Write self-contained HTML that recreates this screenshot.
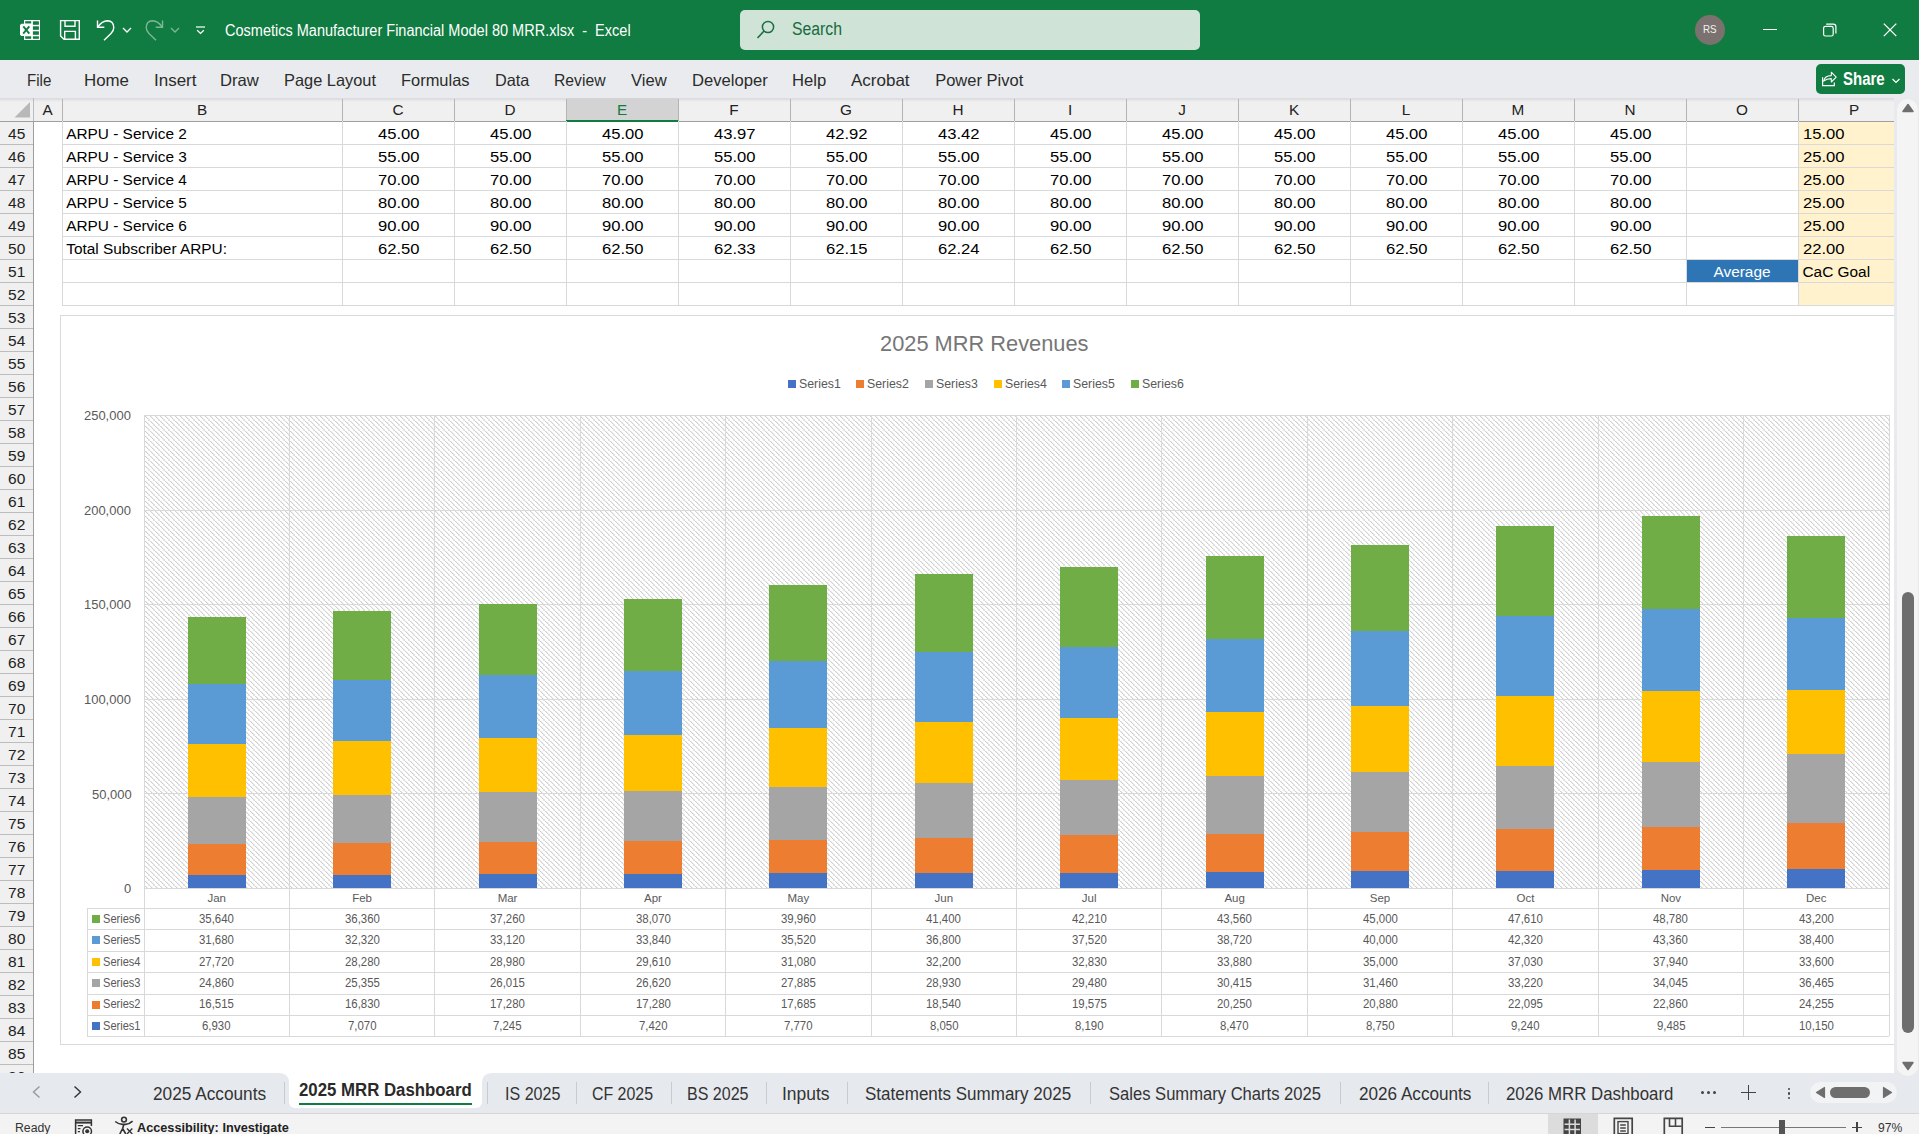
<!DOCTYPE html>
<html><head><meta charset="utf-8"><title>Excel</title>
<style>
html,body{margin:0;padding:0;}
body{width:1919px;height:1134px;overflow:hidden;position:relative;background:#fff;font-family:'Liberation Sans', sans-serif;}
div{box-sizing:border-box;}
</style></head><body>
<div style="position:absolute;left:0px;top:0px;width:1919px;height:60px;background:#107c41;"></div><div style="position:absolute;left:740px;top:10px;width:460px;height:40px;background:#cfe3d6;border-radius:5px"></div><svg style="position:absolute;left:754px;top:18px" width="24" height="24" viewBox="0 0 24 24"><circle cx="14" cy="9" r="5.6" fill="none" stroke="#1a6e40" stroke-width="1.5"/><line x1="10" y1="13" x2="3.5" y2="20" stroke="#1a6e40" stroke-width="1.6"/></svg><div style="position:absolute;left:1695px;top:15px;width:30px;height:30px;background:#7b7270;border-radius:50%"></div><div style="position:absolute;left:1763px;top:29px;width:14px;height:1.3px;background:#ffffff;"></div><svg style="position:absolute;left:1820px;top:20px" width="20" height="20" viewBox="0 0 20 20"><rect x="3.6" y="6.4" width="9.6" height="9.6" rx="1.8" fill="none" stroke="#fff" stroke-width="1.2"/><path d="M6.2 4.2 H13.3 Q15.9 4.2 15.9 6.8 V13.6" fill="none" stroke="#fff" stroke-width="1.2"/></svg><svg style="position:absolute;left:1880px;top:20px" width="20" height="20" viewBox="0 0 20 20"><path d="M3.8 3.6 L16.3 16.1 M16.3 3.6 L3.8 16.1" stroke="#fff" stroke-width="1.3"/></svg><svg style="position:absolute;left:16px;top:16px" width="30" height="28" viewBox="0 0 30 28">
<rect x="8" y="4" width="16" height="20" fill="#fff"/>
<g fill="#107c41"><rect x="9.2" y="5.2" width="6" height="2.4"/><rect x="9.2" y="20.3" width="6" height="2.5"/>
<rect x="16.9" y="5.3" width="6" height="3.5"/><rect x="16.9" y="10.3" width="6" height="3.5"/><rect x="16.9" y="15.3" width="6" height="3.5"/><rect x="16.9" y="20.3" width="6" height="2.5"/></g>
<path d="M4 9 L5.4 7.8 L16 7.8 L16 20 L5.4 20 L4 18.8 Z" fill="#fff"/>
<path d="M7.3 10.3 L13.3 17.6 M13.3 10.3 L7.2 17.6" stroke="#107c41" stroke-width="1.9"/>
</svg><svg style="position:absolute;left:58px;top:18px" width="24" height="24" viewBox="0 0 24 24">
<path d="M2.6 2.6 H21.3 V21.3 H6 L2.6 17.9 Z" fill="none" stroke="#fff" stroke-width="1.4"/>
<path d="M7 2.6 V8.2 H17 V2.6" fill="none" stroke="#fff" stroke-width="1.4"/>
<path d="M6.7 21.3 V13.4 H17.4 V21.3" fill="none" stroke="#fff" stroke-width="1.4"/>
</svg><svg style="position:absolute;left:94px;top:18px" width="24" height="24" viewBox="0 0 24 24">
<path d="M3.5 2.5 V9.3 H10.3" fill="none" stroke="#fff" stroke-width="1.4"/>
<path d="M3.8 9 Q8 3 13.5 2.8 Q19.5 3 19.8 9.5 Q19.8 12.5 17 15.5 L10 22.2" fill="none" stroke="#fff" stroke-width="1.4"/>
</svg><svg style="position:absolute;left:121px;top:25px" width="12" height="10" viewBox="0 0 12 10"><path d="M2 3 L6 7 L10 3" fill="none" stroke="#fff" stroke-width="1.3"/></svg><svg style="position:absolute;left:142px;top:18px" width="24" height="24" viewBox="0 0 24 24" opacity="0.45">
<path d="M20.5 2.5 V9.3 H13.7" fill="none" stroke="#fff" stroke-width="1.4"/>
<path d="M20.2 9 Q16 3 10.5 2.8 Q4.5 3 4.2 9.5 Q4.2 12.5 7 15.5 L14 22.2" fill="none" stroke="#fff" stroke-width="1.4"/>
</svg><svg style="position:absolute;left:169px;top:25px" width="12" height="10" viewBox="0 0 12 10" opacity="0.45"><path d="M2 3 L6 7 L10 3" fill="none" stroke="#fff" stroke-width="1.3"/></svg><svg style="position:absolute;left:193px;top:23px" width="14" height="14" viewBox="0 0 14 14"><path d="M3 4 H12" stroke="#fff" stroke-width="1.2"/><path d="M4.2 7.2 L7.5 10.4 L10.8 7.2" fill="none" stroke="#fff" stroke-width="1.3"/></svg><div style="position:absolute;left:0px;top:60px;width:1919px;height:38px;background:#e9ebee;"></div><div style="position:absolute;left:1816px;top:64px;width:89px;height:30px;background:#107c41;border-radius:5px"></div><svg style="position:absolute;left:1820px;top:69px" width="20" height="20" viewBox="0 0 20 20">
<path d="M2.6 8.2 V16.6 H14.3 V13.4" fill="none" stroke="#fff" stroke-width="1.2"/>
<path d="M3.6 12.2 Q4.6 6.6 11.3 6.6 L11.3 3.2 L16.2 8.2 L11.3 13 L11.3 9.6 Q6.6 9.6 3.6 12.2 Z" fill="none" stroke="#fff" stroke-width="1.05" stroke-linejoin="round"/>
</svg><svg style="position:absolute;left:1890px;top:76px" width="12" height="10" viewBox="0 0 12 10"><path d="M2.5 3 L6 6.5 L9.5 3" fill="none" stroke="#fff" stroke-width="1.2"/></svg><div style="position:absolute;left:0px;top:98px;width:1894px;height:975px;background:#ffffff;"></div><div style="position:absolute;left:0px;top:98px;width:1894px;height:23px;background:#f0f0f0;"></div><div style="position:absolute;left:0px;top:98px;width:1894px;height:4px;background:linear-gradient(#d9dadc,#f0f0f0);"></div><svg style="position:absolute;left:0px;top:98px" width="33" height="23"><path d="M14.5 19.5 L30 19.5 L30 4 Z" fill="#b8b8b8"/></svg><div style="position:absolute;left:566px;top:98px;width:112px;height:23px;background:#d3d3d3;"></div><div style="position:absolute;left:62px;top:99px;width:1px;height:22px;background:#b4b4b4;"></div><div style="position:absolute;left:342px;top:99px;width:1px;height:22px;background:#b4b4b4;"></div><div style="position:absolute;left:454px;top:99px;width:1px;height:22px;background:#b4b4b4;"></div><div style="position:absolute;left:566px;top:99px;width:1px;height:22px;background:#b4b4b4;"></div><div style="position:absolute;left:678px;top:99px;width:1px;height:22px;background:#b4b4b4;"></div><div style="position:absolute;left:790px;top:99px;width:1px;height:22px;background:#b4b4b4;"></div><div style="position:absolute;left:902px;top:99px;width:1px;height:22px;background:#b4b4b4;"></div><div style="position:absolute;left:1014px;top:99px;width:1px;height:22px;background:#b4b4b4;"></div><div style="position:absolute;left:1126px;top:99px;width:1px;height:22px;background:#b4b4b4;"></div><div style="position:absolute;left:1238px;top:99px;width:1px;height:22px;background:#b4b4b4;"></div><div style="position:absolute;left:1350px;top:99px;width:1px;height:22px;background:#b4b4b4;"></div><div style="position:absolute;left:1462px;top:99px;width:1px;height:22px;background:#b4b4b4;"></div><div style="position:absolute;left:1574px;top:99px;width:1px;height:22px;background:#b4b4b4;"></div><div style="position:absolute;left:1686px;top:99px;width:1px;height:22px;background:#b4b4b4;"></div><div style="position:absolute;left:1798px;top:99px;width:1px;height:22px;background:#b4b4b4;"></div><div style="position:absolute;left:1910px;top:99px;width:1px;height:22px;background:#b4b4b4;"></div><div style="position:absolute;left:33px;top:98px;width:1px;height:23px;background:#bdbdbd;"></div><div style="position:absolute;left:0px;top:121px;width:1894px;height:1px;background:#9e9e9e;"></div><div style="position:absolute;left:566px;top:120px;width:112px;height:2px;background:#107c41;"></div><div style="position:absolute;left:0px;top:122px;width:33px;height:951px;background:#f0f0f0;"></div><div style="position:absolute;left:33px;top:121px;width:1px;height:952px;background:#9e9e9e;"></div><div style="position:absolute;left:0px;top:144px;width:33px;height:1px;background:#bdbdbd;"></div><div style="position:absolute;left:0px;top:167px;width:33px;height:1px;background:#bdbdbd;"></div><div style="position:absolute;left:0px;top:190px;width:33px;height:1px;background:#bdbdbd;"></div><div style="position:absolute;left:0px;top:213px;width:33px;height:1px;background:#bdbdbd;"></div><div style="position:absolute;left:0px;top:236px;width:33px;height:1px;background:#bdbdbd;"></div><div style="position:absolute;left:0px;top:259px;width:33px;height:1px;background:#bdbdbd;"></div><div style="position:absolute;left:0px;top:282px;width:33px;height:1px;background:#bdbdbd;"></div><div style="position:absolute;left:0px;top:305px;width:33px;height:1px;background:#bdbdbd;"></div><div style="position:absolute;left:0px;top:328px;width:33px;height:1px;background:#bdbdbd;"></div><div style="position:absolute;left:0px;top:351px;width:33px;height:1px;background:#bdbdbd;"></div><div style="position:absolute;left:0px;top:374px;width:33px;height:1px;background:#bdbdbd;"></div><div style="position:absolute;left:0px;top:397px;width:33px;height:1px;background:#bdbdbd;"></div><div style="position:absolute;left:0px;top:420px;width:33px;height:1px;background:#bdbdbd;"></div><div style="position:absolute;left:0px;top:443px;width:33px;height:1px;background:#bdbdbd;"></div><div style="position:absolute;left:0px;top:466px;width:33px;height:1px;background:#bdbdbd;"></div><div style="position:absolute;left:0px;top:489px;width:33px;height:1px;background:#bdbdbd;"></div><div style="position:absolute;left:0px;top:512px;width:33px;height:1px;background:#bdbdbd;"></div><div style="position:absolute;left:0px;top:535px;width:33px;height:1px;background:#bdbdbd;"></div><div style="position:absolute;left:0px;top:558px;width:33px;height:1px;background:#bdbdbd;"></div><div style="position:absolute;left:0px;top:581px;width:33px;height:1px;background:#bdbdbd;"></div><div style="position:absolute;left:0px;top:604px;width:33px;height:1px;background:#bdbdbd;"></div><div style="position:absolute;left:0px;top:627px;width:33px;height:1px;background:#bdbdbd;"></div><div style="position:absolute;left:0px;top:650px;width:33px;height:1px;background:#bdbdbd;"></div><div style="position:absolute;left:0px;top:673px;width:33px;height:1px;background:#bdbdbd;"></div><div style="position:absolute;left:0px;top:696px;width:33px;height:1px;background:#bdbdbd;"></div><div style="position:absolute;left:0px;top:719px;width:33px;height:1px;background:#bdbdbd;"></div><div style="position:absolute;left:0px;top:742px;width:33px;height:1px;background:#bdbdbd;"></div><div style="position:absolute;left:0px;top:765px;width:33px;height:1px;background:#bdbdbd;"></div><div style="position:absolute;left:0px;top:788px;width:33px;height:1px;background:#bdbdbd;"></div><div style="position:absolute;left:0px;top:811px;width:33px;height:1px;background:#bdbdbd;"></div><div style="position:absolute;left:0px;top:834px;width:33px;height:1px;background:#bdbdbd;"></div><div style="position:absolute;left:0px;top:857px;width:33px;height:1px;background:#bdbdbd;"></div><div style="position:absolute;left:0px;top:880px;width:33px;height:1px;background:#bdbdbd;"></div><div style="position:absolute;left:0px;top:903px;width:33px;height:1px;background:#bdbdbd;"></div><div style="position:absolute;left:0px;top:926px;width:33px;height:1px;background:#bdbdbd;"></div><div style="position:absolute;left:0px;top:949px;width:33px;height:1px;background:#bdbdbd;"></div><div style="position:absolute;left:0px;top:972px;width:33px;height:1px;background:#bdbdbd;"></div><div style="position:absolute;left:0px;top:995px;width:33px;height:1px;background:#bdbdbd;"></div><div style="position:absolute;left:0px;top:1018px;width:33px;height:1px;background:#bdbdbd;"></div><div style="position:absolute;left:0px;top:1041px;width:33px;height:1px;background:#bdbdbd;"></div><div style="position:absolute;left:0px;top:1064px;width:33px;height:1px;background:#bdbdbd;"></div><div style="position:absolute;left:0px;top:1087px;width:33px;height:1px;background:#bdbdbd;"></div><div style="position:absolute;left:0;top:1065px;width:33px;height:8px;overflow:hidden"><div style="position:absolute;left:8.1px;top:3.78px;font-size:15.5px;line-height:1;color:#222">86</div></div><div style="position:absolute;left:1798px;top:122px;width:96px;height:184px;background:#fff2cc;"></div><div style="position:absolute;left:1687px;top:260px;width:111px;height:22px;background:#2e75b6;"></div><div style="position:absolute;left:62px;top:144px;width:1832px;height:1px;background:#d9d9d9;"></div><div style="position:absolute;left:62px;top:167px;width:1832px;height:1px;background:#d9d9d9;"></div><div style="position:absolute;left:62px;top:190px;width:1832px;height:1px;background:#d9d9d9;"></div><div style="position:absolute;left:62px;top:213px;width:1832px;height:1px;background:#d9d9d9;"></div><div style="position:absolute;left:62px;top:236px;width:1832px;height:1px;background:#d9d9d9;"></div><div style="position:absolute;left:62px;top:259px;width:1832px;height:1px;background:#d9d9d9;"></div><div style="position:absolute;left:62px;top:282px;width:1832px;height:1px;background:#d9d9d9;"></div><div style="position:absolute;left:62px;top:305px;width:1832px;height:1px;background:#d9d9d9;"></div><div style="position:absolute;left:62px;top:121px;width:1px;height:184px;background:#d9d9d9;"></div><div style="position:absolute;left:342px;top:121px;width:1px;height:184px;background:#d9d9d9;"></div><div style="position:absolute;left:454px;top:121px;width:1px;height:184px;background:#d9d9d9;"></div><div style="position:absolute;left:566px;top:121px;width:1px;height:184px;background:#d9d9d9;"></div><div style="position:absolute;left:678px;top:121px;width:1px;height:184px;background:#d9d9d9;"></div><div style="position:absolute;left:790px;top:121px;width:1px;height:184px;background:#d9d9d9;"></div><div style="position:absolute;left:902px;top:121px;width:1px;height:184px;background:#d9d9d9;"></div><div style="position:absolute;left:1014px;top:121px;width:1px;height:184px;background:#d9d9d9;"></div><div style="position:absolute;left:1126px;top:121px;width:1px;height:184px;background:#d9d9d9;"></div><div style="position:absolute;left:1238px;top:121px;width:1px;height:184px;background:#d9d9d9;"></div><div style="position:absolute;left:1350px;top:121px;width:1px;height:184px;background:#d9d9d9;"></div><div style="position:absolute;left:1462px;top:121px;width:1px;height:184px;background:#d9d9d9;"></div><div style="position:absolute;left:1574px;top:121px;width:1px;height:184px;background:#d9d9d9;"></div><div style="position:absolute;left:1686px;top:121px;width:1px;height:184px;background:#d9d9d9;"></div><div style="position:absolute;left:1798px;top:121px;width:1px;height:184px;background:#d9d9d9;"></div><div style="position:absolute;left:60px;top:315px;width:1834px;height:730px;background:#ffffff;border:1px solid #d9d9d9;box-sizing:border-box;border-right:none"></div><div style="position:absolute;left:788px;top:380px;width:8px;height:8px;background:#4472c4;"></div><div style="position:absolute;left:856px;top:380px;width:8px;height:8px;background:#ed7d31;"></div><div style="position:absolute;left:925px;top:380px;width:8px;height:8px;background:#a5a5a5;"></div><div style="position:absolute;left:993.8px;top:380px;width:8px;height:8px;background:#ffc000;"></div><div style="position:absolute;left:1062px;top:380px;width:8px;height:8px;background:#5b9bd5;"></div><div style="position:absolute;left:1131px;top:380px;width:8px;height:8px;background:#70ad47;"></div><svg style="position:absolute;left:144px;top:415px" width="1745" height="473"><defs><pattern id="hatch" width="5" height="5" patternUnits="userSpaceOnUse"><rect width="5" height="5" fill="#ffffff"/><g shape-rendering="crispEdges"><rect x="1" y="1" width="1" height="1" fill="#cfcfcf"/><rect x="2" y="2" width="1" height="1" fill="#cfcfcf"/><rect x="3" y="3" width="1" height="1" fill="#cfcfcf"/><rect x="4" y="4" width="1" height="1" fill="#dcdcdc"/><rect x="0" y="0" width="1" height="1" fill="#dcdcdc"/><rect x="2" y="1" width="1" height="1" fill="#efefef"/><rect x="3" y="2" width="1" height="1" fill="#efefef"/><rect x="4" y="3" width="1" height="1" fill="#efefef"/><rect x="0" y="4" width="1" height="1" fill="#e6e6e6"/><rect x="4" y="0" width="1" height="1" fill="#e6e6e6"/></g></pattern></defs><rect width="100%" height="100%" fill="url(#hatch)"/></svg><div style="position:absolute;left:144px;top:415px;width:1745px;height:1px;background:#d9d9d9;"></div><div style="position:absolute;left:144px;top:510px;width:1745px;height:1px;background:#d9d9d9;"></div><div style="position:absolute;left:144px;top:604px;width:1745px;height:1px;background:#d9d9d9;"></div><div style="position:absolute;left:144px;top:699px;width:1745px;height:1px;background:#d9d9d9;"></div><div style="position:absolute;left:144px;top:793px;width:1745px;height:1px;background:#d9d9d9;"></div><div style="position:absolute;left:144px;top:888px;width:1745px;height:1px;background:#d9d9d9;"></div><div style="position:absolute;left:144px;top:415px;width:1px;height:621px;background:#d9d9d9;"></div><div style="position:absolute;left:289px;top:415px;width:1px;height:621px;background:#d9d9d9;"></div><div style="position:absolute;left:434px;top:415px;width:1px;height:621px;background:#d9d9d9;"></div><div style="position:absolute;left:580px;top:415px;width:1px;height:621px;background:#d9d9d9;"></div><div style="position:absolute;left:725px;top:415px;width:1px;height:621px;background:#d9d9d9;"></div><div style="position:absolute;left:871px;top:415px;width:1px;height:621px;background:#d9d9d9;"></div><div style="position:absolute;left:1016px;top:415px;width:1px;height:621px;background:#d9d9d9;"></div><div style="position:absolute;left:1161px;top:415px;width:1px;height:621px;background:#d9d9d9;"></div><div style="position:absolute;left:1307px;top:415px;width:1px;height:621px;background:#d9d9d9;"></div><div style="position:absolute;left:1452px;top:415px;width:1px;height:621px;background:#d9d9d9;"></div><div style="position:absolute;left:1598px;top:415px;width:1px;height:621px;background:#d9d9d9;"></div><div style="position:absolute;left:1743px;top:415px;width:1px;height:621px;background:#d9d9d9;"></div><div style="position:absolute;left:1889px;top:415px;width:1px;height:621px;background:#d9d9d9;"></div><div style="position:absolute;left:144px;top:415px;width:1px;height:473px;background:#d9d9d9;"></div><div style="position:absolute;left:187.71px;top:874.89px;width:58px;height:13.11px;background:#4472c4;"></div><div style="position:absolute;left:187.71px;top:843.64px;width:58px;height:31.25px;background:#ed7d31;"></div><div style="position:absolute;left:187.71px;top:796.61px;width:58px;height:47.04px;background:#a5a5a5;"></div><div style="position:absolute;left:187.71px;top:744.16px;width:58px;height:52.45px;background:#ffc000;"></div><div style="position:absolute;left:187.71px;top:684.22px;width:58px;height:59.94px;background:#5b9bd5;"></div><div style="position:absolute;left:187.71px;top:616.79px;width:58px;height:67.43px;background:#70ad47;"></div><div style="position:absolute;left:333.12px;top:874.62px;width:58px;height:13.38px;background:#4472c4;"></div><div style="position:absolute;left:333.12px;top:842.78px;width:58px;height:31.84px;background:#ed7d31;"></div><div style="position:absolute;left:333.12px;top:794.81px;width:58px;height:47.97px;background:#a5a5a5;"></div><div style="position:absolute;left:333.12px;top:741.3px;width:58px;height:53.51px;background:#ffc000;"></div><div style="position:absolute;left:333.12px;top:680.15px;width:58px;height:61.15px;background:#5b9bd5;"></div><div style="position:absolute;left:333.12px;top:611.36px;width:58px;height:68.79px;background:#70ad47;"></div><div style="position:absolute;left:478.54px;top:874.29px;width:58px;height:13.71px;background:#4472c4;"></div><div style="position:absolute;left:478.54px;top:841.6px;width:58px;height:32.69px;background:#ed7d31;"></div><div style="position:absolute;left:478.54px;top:792.38px;width:58px;height:49.22px;background:#a5a5a5;"></div><div style="position:absolute;left:478.54px;top:737.55px;width:58px;height:54.83px;background:#ffc000;"></div><div style="position:absolute;left:478.54px;top:674.89px;width:58px;height:62.66px;background:#5b9bd5;"></div><div style="position:absolute;left:478.54px;top:604.39px;width:58px;height:70.5px;background:#70ad47;"></div><div style="position:absolute;left:623.96px;top:873.96px;width:58px;height:14.04px;background:#4472c4;"></div><div style="position:absolute;left:623.96px;top:841.27px;width:58px;height:32.69px;background:#ed7d31;"></div><div style="position:absolute;left:623.96px;top:790.9px;width:58px;height:50.37px;background:#a5a5a5;"></div><div style="position:absolute;left:623.96px;top:734.88px;width:58px;height:56.02px;background:#ffc000;"></div><div style="position:absolute;left:623.96px;top:670.86px;width:58px;height:64.03px;background:#5b9bd5;"></div><div style="position:absolute;left:623.96px;top:598.83px;width:58px;height:72.03px;background:#70ad47;"></div><div style="position:absolute;left:769.38px;top:873.3px;width:58px;height:14.7px;background:#4472c4;"></div><div style="position:absolute;left:769.38px;top:839.84px;width:58px;height:33.46px;background:#ed7d31;"></div><div style="position:absolute;left:769.38px;top:787.08px;width:58px;height:52.76px;background:#a5a5a5;"></div><div style="position:absolute;left:769.38px;top:728.28px;width:58px;height:58.8px;background:#ffc000;"></div><div style="position:absolute;left:769.38px;top:661.07px;width:58px;height:67.2px;background:#5b9bd5;"></div><div style="position:absolute;left:769.38px;top:585.47px;width:58px;height:75.6px;background:#70ad47;"></div><div style="position:absolute;left:914.79px;top:872.77px;width:58px;height:15.23px;background:#4472c4;"></div><div style="position:absolute;left:914.79px;top:837.69px;width:58px;height:35.08px;background:#ed7d31;"></div><div style="position:absolute;left:914.79px;top:782.96px;width:58px;height:54.74px;background:#a5a5a5;"></div><div style="position:absolute;left:914.79px;top:722.03px;width:58px;height:60.92px;background:#ffc000;"></div><div style="position:absolute;left:914.79px;top:652.41px;width:58px;height:69.63px;background:#5b9bd5;"></div><div style="position:absolute;left:914.79px;top:574.08px;width:58px;height:78.33px;background:#70ad47;"></div><div style="position:absolute;left:1060.21px;top:872.5px;width:58px;height:15.5px;background:#4472c4;"></div><div style="position:absolute;left:1060.21px;top:835.47px;width:58px;height:37.04px;background:#ed7d31;"></div><div style="position:absolute;left:1060.21px;top:779.69px;width:58px;height:55.78px;background:#a5a5a5;"></div><div style="position:absolute;left:1060.21px;top:717.58px;width:58px;height:62.11px;background:#ffc000;"></div><div style="position:absolute;left:1060.21px;top:646.59px;width:58px;height:70.99px;background:#5b9bd5;"></div><div style="position:absolute;left:1060.21px;top:566.73px;width:58px;height:79.86px;background:#70ad47;"></div><div style="position:absolute;left:1205.62px;top:871.97px;width:58px;height:16.03px;background:#4472c4;"></div><div style="position:absolute;left:1205.62px;top:833.66px;width:58px;height:38.31px;background:#ed7d31;"></div><div style="position:absolute;left:1205.62px;top:776.12px;width:58px;height:57.55px;background:#a5a5a5;"></div><div style="position:absolute;left:1205.62px;top:712.02px;width:58px;height:64.1px;background:#ffc000;"></div><div style="position:absolute;left:1205.62px;top:638.76px;width:58px;height:73.26px;background:#5b9bd5;"></div><div style="position:absolute;left:1205.62px;top:556.34px;width:58px;height:82.42px;background:#70ad47;"></div><div style="position:absolute;left:1351.04px;top:871.45px;width:58px;height:16.55px;background:#4472c4;"></div><div style="position:absolute;left:1351.04px;top:831.94px;width:58px;height:39.5px;background:#ed7d31;"></div><div style="position:absolute;left:1351.04px;top:772.42px;width:58px;height:59.52px;background:#a5a5a5;"></div><div style="position:absolute;left:1351.04px;top:706.2px;width:58px;height:66.22px;background:#ffc000;"></div><div style="position:absolute;left:1351.04px;top:630.52px;width:58px;height:75.68px;background:#5b9bd5;"></div><div style="position:absolute;left:1351.04px;top:545.38px;width:58px;height:85.14px;background:#70ad47;"></div><div style="position:absolute;left:1496.46px;top:870.52px;width:58px;height:17.48px;background:#4472c4;"></div><div style="position:absolute;left:1496.46px;top:828.71px;width:58px;height:41.8px;background:#ed7d31;"></div><div style="position:absolute;left:1496.46px;top:765.86px;width:58px;height:62.85px;background:#a5a5a5;"></div><div style="position:absolute;left:1496.46px;top:695.8px;width:58px;height:70.06px;background:#ffc000;"></div><div style="position:absolute;left:1496.46px;top:615.73px;width:58px;height:80.07px;background:#5b9bd5;"></div><div style="position:absolute;left:1496.46px;top:525.65px;width:58px;height:90.08px;background:#70ad47;"></div><div style="position:absolute;left:1641.88px;top:870.05px;width:58px;height:17.95px;background:#4472c4;"></div><div style="position:absolute;left:1641.88px;top:826.8px;width:58px;height:43.25px;background:#ed7d31;"></div><div style="position:absolute;left:1641.88px;top:762.39px;width:58px;height:64.41px;background:#a5a5a5;"></div><div style="position:absolute;left:1641.88px;top:690.61px;width:58px;height:71.78px;background:#ffc000;"></div><div style="position:absolute;left:1641.88px;top:608.57px;width:58px;height:82.04px;background:#5b9bd5;"></div><div style="position:absolute;left:1641.88px;top:516.28px;width:58px;height:92.29px;background:#70ad47;"></div><div style="position:absolute;left:1787.29px;top:868.8px;width:58px;height:19.2px;background:#4472c4;"></div><div style="position:absolute;left:1787.29px;top:822.91px;width:58px;height:45.89px;background:#ed7d31;"></div><div style="position:absolute;left:1787.29px;top:753.91px;width:58px;height:68.99px;background:#a5a5a5;"></div><div style="position:absolute;left:1787.29px;top:690.34px;width:58px;height:63.57px;background:#ffc000;"></div><div style="position:absolute;left:1787.29px;top:617.69px;width:58px;height:72.65px;background:#5b9bd5;"></div><div style="position:absolute;left:1787.29px;top:535.96px;width:58px;height:81.73px;background:#70ad47;"></div><div style="position:absolute;left:87px;top:908px;width:1802px;height:1px;background:#d9d9d9;"></div><div style="position:absolute;left:87px;top:929px;width:1802px;height:1px;background:#d9d9d9;"></div><div style="position:absolute;left:87px;top:951px;width:1802px;height:1px;background:#d9d9d9;"></div><div style="position:absolute;left:87px;top:972px;width:1802px;height:1px;background:#d9d9d9;"></div><div style="position:absolute;left:87px;top:994px;width:1802px;height:1px;background:#d9d9d9;"></div><div style="position:absolute;left:87px;top:1015px;width:1802px;height:1px;background:#d9d9d9;"></div><div style="position:absolute;left:87px;top:1036px;width:1802px;height:1px;background:#d9d9d9;"></div><div style="position:absolute;left:87px;top:908px;width:1px;height:129px;background:#d9d9d9;"></div><div style="position:absolute;left:92px;top:915px;width:8px;height:7.5px;background:#70ad47;"></div><div style="position:absolute;left:92px;top:936px;width:8px;height:7.5px;background:#5b9bd5;"></div><div style="position:absolute;left:92px;top:958px;width:8px;height:7.5px;background:#ffc000;"></div><div style="position:absolute;left:92px;top:979px;width:8px;height:7.5px;background:#a5a5a5;"></div><div style="position:absolute;left:92px;top:1001px;width:8px;height:7.5px;background:#ed7d31;"></div><div style="position:absolute;left:92px;top:1022px;width:8px;height:7.5px;background:#4472c4;"></div><div style="position:absolute;left:1889px;top:415px;width:1px;height:621px;background:#d9d9d9;"></div>
<div style="position:absolute;left:225.00px;top:23.39px;font-size:15.6px;font-weight:400;color:#ffffff;line-height:1;white-space:pre;transform:scaleX(0.9305);transform-origin:0 0;">Cosmetics Manufacturer Financial Model 80 MRR.xlsx  -  Excel</div><div style="position:absolute;left:792.40px;top:21.40px;font-size:17.6px;font-weight:400;color:#176b3e;line-height:1;white-space:pre;transform:scaleX(0.8969);transform-origin:0 0;">Search</div><div style="position:absolute;left:1703.20px;top:24.47px;font-size:11.5px;font-weight:400;color:#f2f2f2;line-height:1;white-space:pre;transform:scaleX(0.8508);transform-origin:0 0;">RS</div><div style="position:absolute;left:27.00px;top:72.23px;font-size:16.5px;font-weight:400;color:#2b2b2b;line-height:1;white-space:pre;transform:scaleX(0.9137);transform-origin:0 0;">File</div><div style="position:absolute;left:84.30px;top:72.23px;font-size:16.5px;font-weight:400;color:#2b2b2b;line-height:1;white-space:pre;transform:scaleX(1.0224);transform-origin:0 0;">Home</div><div style="position:absolute;left:153.80px;top:72.23px;font-size:16.5px;font-weight:400;color:#2b2b2b;line-height:1;white-space:pre;transform:scaleX(1.0295);transform-origin:0 0;">Insert</div><div style="position:absolute;left:220.00px;top:72.23px;font-size:16.5px;font-weight:400;color:#2b2b2b;line-height:1;white-space:pre;transform:scaleX(1.0074);transform-origin:0 0;">Draw</div><div style="position:absolute;left:284.00px;top:72.23px;font-size:16.5px;font-weight:400;color:#2b2b2b;line-height:1;white-space:pre;transform:scaleX(0.9927);transform-origin:0 0;">Page Layout</div><div style="position:absolute;left:401.00px;top:72.23px;font-size:16.5px;font-weight:400;color:#2b2b2b;line-height:1;white-space:pre;transform:scaleX(0.9961);transform-origin:0 0;">Formulas</div><div style="position:absolute;left:494.60px;top:72.23px;font-size:16.5px;font-weight:400;color:#2b2b2b;line-height:1;white-space:pre;transform:scaleX(0.9868);transform-origin:0 0;">Data</div><div style="position:absolute;left:554.40px;top:72.23px;font-size:16.5px;font-weight:400;color:#2b2b2b;line-height:1;white-space:pre;transform:scaleX(0.9536);transform-origin:0 0;">Review</div><div style="position:absolute;left:631.00px;top:72.23px;font-size:16.5px;font-weight:400;color:#2b2b2b;line-height:1;white-space:pre;transform:scaleX(1.0065);transform-origin:0 0;">View</div><div style="position:absolute;left:691.60px;top:72.23px;font-size:16.5px;font-weight:400;color:#2b2b2b;line-height:1;white-space:pre;transform:scaleX(1.0077);transform-origin:0 0;">Developer</div><div style="position:absolute;left:792.20px;top:72.23px;font-size:16.5px;font-weight:400;color:#2b2b2b;line-height:1;white-space:pre;transform:scaleX(1.0077);transform-origin:0 0;">Help</div><div style="position:absolute;left:851.20px;top:72.23px;font-size:16.5px;font-weight:400;color:#2b2b2b;line-height:1;white-space:pre;transform:scaleX(1.0303);transform-origin:0 0;">Acrobat</div><div style="position:absolute;left:935.20px;top:72.23px;font-size:16.5px;font-weight:400;color:#2b2b2b;line-height:1;white-space:pre;">Power Pivot</div><div style="position:absolute;left:1842.70px;top:71.39px;font-size:17.5px;font-weight:700;color:#ffffff;line-height:1;white-space:pre;transform:scaleX(0.8573);transform-origin:0 0;">Share</div><div style="position:absolute;left:42.40px;top:102.35px;font-size:15.3px;font-weight:400;color:#222222;line-height:1;white-space:pre;">A</div><div style="position:absolute;left:196.90px;top:102.35px;font-size:15.3px;font-weight:400;color:#222222;line-height:1;white-space:pre;">B</div><div style="position:absolute;left:392.47px;top:102.35px;font-size:15.3px;font-weight:400;color:#222222;line-height:1;white-space:pre;">C</div><div style="position:absolute;left:504.47px;top:102.35px;font-size:15.3px;font-weight:400;color:#222222;line-height:1;white-space:pre;">D</div><div style="position:absolute;left:616.90px;top:102.35px;font-size:15.3px;font-weight:400;color:#107c41;line-height:1;white-space:pre;">E</div><div style="position:absolute;left:729.32px;top:102.35px;font-size:15.3px;font-weight:400;color:#222222;line-height:1;white-space:pre;">F</div><div style="position:absolute;left:840.05px;top:102.35px;font-size:15.3px;font-weight:400;color:#222222;line-height:1;white-space:pre;">G</div><div style="position:absolute;left:952.47px;top:102.35px;font-size:15.3px;font-weight:400;color:#222222;line-height:1;white-space:pre;">H</div><div style="position:absolute;left:1067.88px;top:102.35px;font-size:15.3px;font-weight:400;color:#222222;line-height:1;white-space:pre;">I</div><div style="position:absolute;left:1178.17px;top:102.35px;font-size:15.3px;font-weight:400;color:#222222;line-height:1;white-space:pre;">J</div><div style="position:absolute;left:1288.90px;top:102.35px;font-size:15.3px;font-weight:400;color:#222222;line-height:1;white-space:pre;">K</div><div style="position:absolute;left:1401.74px;top:102.35px;font-size:15.3px;font-weight:400;color:#222222;line-height:1;white-space:pre;">L</div><div style="position:absolute;left:1511.62px;top:102.35px;font-size:15.3px;font-weight:400;color:#222222;line-height:1;white-space:pre;">M</div><div style="position:absolute;left:1624.47px;top:102.35px;font-size:15.3px;font-weight:400;color:#222222;line-height:1;white-space:pre;">N</div><div style="position:absolute;left:1736.05px;top:102.35px;font-size:15.3px;font-weight:400;color:#222222;line-height:1;white-space:pre;">O</div><div style="position:absolute;left:1848.90px;top:102.35px;font-size:15.3px;font-weight:400;color:#222222;line-height:1;white-space:pre;">P</div><div style="position:absolute;left:8.07px;top:125.78px;font-size:15.5px;font-weight:400;color:#222222;line-height:1;white-space:pre;">45</div><div style="position:absolute;left:8.07px;top:148.78px;font-size:15.5px;font-weight:400;color:#222222;line-height:1;white-space:pre;">46</div><div style="position:absolute;left:8.07px;top:171.78px;font-size:15.5px;font-weight:400;color:#222222;line-height:1;white-space:pre;">47</div><div style="position:absolute;left:8.07px;top:194.78px;font-size:15.5px;font-weight:400;color:#222222;line-height:1;white-space:pre;">48</div><div style="position:absolute;left:8.07px;top:217.78px;font-size:15.5px;font-weight:400;color:#222222;line-height:1;white-space:pre;">49</div><div style="position:absolute;left:8.07px;top:240.78px;font-size:15.5px;font-weight:400;color:#222222;line-height:1;white-space:pre;">50</div><div style="position:absolute;left:8.07px;top:263.78px;font-size:15.5px;font-weight:400;color:#222222;line-height:1;white-space:pre;">51</div><div style="position:absolute;left:8.07px;top:286.78px;font-size:15.5px;font-weight:400;color:#222222;line-height:1;white-space:pre;">52</div><div style="position:absolute;left:8.07px;top:309.78px;font-size:15.5px;font-weight:400;color:#222222;line-height:1;white-space:pre;">53</div><div style="position:absolute;left:8.07px;top:332.78px;font-size:15.5px;font-weight:400;color:#222222;line-height:1;white-space:pre;">54</div><div style="position:absolute;left:8.07px;top:355.78px;font-size:15.5px;font-weight:400;color:#222222;line-height:1;white-space:pre;">55</div><div style="position:absolute;left:8.07px;top:378.78px;font-size:15.5px;font-weight:400;color:#222222;line-height:1;white-space:pre;">56</div><div style="position:absolute;left:8.07px;top:401.78px;font-size:15.5px;font-weight:400;color:#222222;line-height:1;white-space:pre;">57</div><div style="position:absolute;left:8.07px;top:424.78px;font-size:15.5px;font-weight:400;color:#222222;line-height:1;white-space:pre;">58</div><div style="position:absolute;left:8.07px;top:447.78px;font-size:15.5px;font-weight:400;color:#222222;line-height:1;white-space:pre;">59</div><div style="position:absolute;left:8.07px;top:470.78px;font-size:15.5px;font-weight:400;color:#222222;line-height:1;white-space:pre;">60</div><div style="position:absolute;left:8.07px;top:493.78px;font-size:15.5px;font-weight:400;color:#222222;line-height:1;white-space:pre;">61</div><div style="position:absolute;left:8.07px;top:516.78px;font-size:15.5px;font-weight:400;color:#222222;line-height:1;white-space:pre;">62</div><div style="position:absolute;left:8.07px;top:539.78px;font-size:15.5px;font-weight:400;color:#222222;line-height:1;white-space:pre;">63</div><div style="position:absolute;left:8.07px;top:562.78px;font-size:15.5px;font-weight:400;color:#222222;line-height:1;white-space:pre;">64</div><div style="position:absolute;left:8.07px;top:585.78px;font-size:15.5px;font-weight:400;color:#222222;line-height:1;white-space:pre;">65</div><div style="position:absolute;left:8.07px;top:608.78px;font-size:15.5px;font-weight:400;color:#222222;line-height:1;white-space:pre;">66</div><div style="position:absolute;left:8.07px;top:631.78px;font-size:15.5px;font-weight:400;color:#222222;line-height:1;white-space:pre;">67</div><div style="position:absolute;left:8.07px;top:654.78px;font-size:15.5px;font-weight:400;color:#222222;line-height:1;white-space:pre;">68</div><div style="position:absolute;left:8.07px;top:677.78px;font-size:15.5px;font-weight:400;color:#222222;line-height:1;white-space:pre;">69</div><div style="position:absolute;left:8.07px;top:700.78px;font-size:15.5px;font-weight:400;color:#222222;line-height:1;white-space:pre;">70</div><div style="position:absolute;left:8.07px;top:723.78px;font-size:15.5px;font-weight:400;color:#222222;line-height:1;white-space:pre;">71</div><div style="position:absolute;left:8.07px;top:746.78px;font-size:15.5px;font-weight:400;color:#222222;line-height:1;white-space:pre;">72</div><div style="position:absolute;left:8.07px;top:769.78px;font-size:15.5px;font-weight:400;color:#222222;line-height:1;white-space:pre;">73</div><div style="position:absolute;left:8.07px;top:792.78px;font-size:15.5px;font-weight:400;color:#222222;line-height:1;white-space:pre;">74</div><div style="position:absolute;left:8.07px;top:815.78px;font-size:15.5px;font-weight:400;color:#222222;line-height:1;white-space:pre;">75</div><div style="position:absolute;left:8.07px;top:838.78px;font-size:15.5px;font-weight:400;color:#222222;line-height:1;white-space:pre;">76</div><div style="position:absolute;left:8.07px;top:861.78px;font-size:15.5px;font-weight:400;color:#222222;line-height:1;white-space:pre;">77</div><div style="position:absolute;left:8.07px;top:884.78px;font-size:15.5px;font-weight:400;color:#222222;line-height:1;white-space:pre;">78</div><div style="position:absolute;left:8.07px;top:907.78px;font-size:15.5px;font-weight:400;color:#222222;line-height:1;white-space:pre;">79</div><div style="position:absolute;left:8.07px;top:930.78px;font-size:15.5px;font-weight:400;color:#222222;line-height:1;white-space:pre;">80</div><div style="position:absolute;left:8.07px;top:953.78px;font-size:15.5px;font-weight:400;color:#222222;line-height:1;white-space:pre;">81</div><div style="position:absolute;left:8.07px;top:976.78px;font-size:15.5px;font-weight:400;color:#222222;line-height:1;white-space:pre;">82</div><div style="position:absolute;left:8.07px;top:999.78px;font-size:15.5px;font-weight:400;color:#222222;line-height:1;white-space:pre;">83</div><div style="position:absolute;left:8.07px;top:1022.78px;font-size:15.5px;font-weight:400;color:#222222;line-height:1;white-space:pre;">84</div><div style="position:absolute;left:8.07px;top:1045.78px;font-size:15.5px;font-weight:400;color:#222222;line-height:1;white-space:pre;">85</div><div style="position:absolute;left:66.20px;top:125.96px;font-size:15.4px;font-weight:400;color:#000;line-height:1;white-space:pre;">ARPU - Service 2</div><div style="position:absolute;left:378.00px;top:125.96px;font-size:15.4px;font-weight:400;color:#000;line-height:1;white-space:pre;transform:scaleX(1.0800);transform-origin:0 0;">45.00</div><div style="position:absolute;left:490.00px;top:125.96px;font-size:15.4px;font-weight:400;color:#000;line-height:1;white-space:pre;transform:scaleX(1.0800);transform-origin:0 0;">45.00</div><div style="position:absolute;left:602.00px;top:125.96px;font-size:15.4px;font-weight:400;color:#000;line-height:1;white-space:pre;transform:scaleX(1.0800);transform-origin:0 0;">45.00</div><div style="position:absolute;left:714.00px;top:125.96px;font-size:15.4px;font-weight:400;color:#000;line-height:1;white-space:pre;transform:scaleX(1.0800);transform-origin:0 0;">43.97</div><div style="position:absolute;left:826.00px;top:125.96px;font-size:15.4px;font-weight:400;color:#000;line-height:1;white-space:pre;transform:scaleX(1.0800);transform-origin:0 0;">42.92</div><div style="position:absolute;left:938.00px;top:125.96px;font-size:15.4px;font-weight:400;color:#000;line-height:1;white-space:pre;transform:scaleX(1.0800);transform-origin:0 0;">43.42</div><div style="position:absolute;left:1050.00px;top:125.96px;font-size:15.4px;font-weight:400;color:#000;line-height:1;white-space:pre;transform:scaleX(1.0800);transform-origin:0 0;">45.00</div><div style="position:absolute;left:1162.00px;top:125.96px;font-size:15.4px;font-weight:400;color:#000;line-height:1;white-space:pre;transform:scaleX(1.0800);transform-origin:0 0;">45.00</div><div style="position:absolute;left:1274.00px;top:125.96px;font-size:15.4px;font-weight:400;color:#000;line-height:1;white-space:pre;transform:scaleX(1.0800);transform-origin:0 0;">45.00</div><div style="position:absolute;left:1386.00px;top:125.96px;font-size:15.4px;font-weight:400;color:#000;line-height:1;white-space:pre;transform:scaleX(1.0800);transform-origin:0 0;">45.00</div><div style="position:absolute;left:1498.00px;top:125.96px;font-size:15.4px;font-weight:400;color:#000;line-height:1;white-space:pre;transform:scaleX(1.0800);transform-origin:0 0;">45.00</div><div style="position:absolute;left:1610.00px;top:125.96px;font-size:15.4px;font-weight:400;color:#000;line-height:1;white-space:pre;transform:scaleX(1.0800);transform-origin:0 0;">45.00</div><div style="position:absolute;left:1802.50px;top:125.96px;font-size:15.4px;font-weight:400;color:#000;line-height:1;white-space:pre;transform:scaleX(1.0800);transform-origin:0 0;">15.00</div><div style="position:absolute;left:66.20px;top:148.96px;font-size:15.4px;font-weight:400;color:#000;line-height:1;white-space:pre;">ARPU - Service 3</div><div style="position:absolute;left:378.00px;top:148.96px;font-size:15.4px;font-weight:400;color:#000;line-height:1;white-space:pre;transform:scaleX(1.0800);transform-origin:0 0;">55.00</div><div style="position:absolute;left:490.00px;top:148.96px;font-size:15.4px;font-weight:400;color:#000;line-height:1;white-space:pre;transform:scaleX(1.0800);transform-origin:0 0;">55.00</div><div style="position:absolute;left:602.00px;top:148.96px;font-size:15.4px;font-weight:400;color:#000;line-height:1;white-space:pre;transform:scaleX(1.0800);transform-origin:0 0;">55.00</div><div style="position:absolute;left:714.00px;top:148.96px;font-size:15.4px;font-weight:400;color:#000;line-height:1;white-space:pre;transform:scaleX(1.0800);transform-origin:0 0;">55.00</div><div style="position:absolute;left:826.00px;top:148.96px;font-size:15.4px;font-weight:400;color:#000;line-height:1;white-space:pre;transform:scaleX(1.0800);transform-origin:0 0;">55.00</div><div style="position:absolute;left:938.00px;top:148.96px;font-size:15.4px;font-weight:400;color:#000;line-height:1;white-space:pre;transform:scaleX(1.0800);transform-origin:0 0;">55.00</div><div style="position:absolute;left:1050.00px;top:148.96px;font-size:15.4px;font-weight:400;color:#000;line-height:1;white-space:pre;transform:scaleX(1.0800);transform-origin:0 0;">55.00</div><div style="position:absolute;left:1162.00px;top:148.96px;font-size:15.4px;font-weight:400;color:#000;line-height:1;white-space:pre;transform:scaleX(1.0800);transform-origin:0 0;">55.00</div><div style="position:absolute;left:1274.00px;top:148.96px;font-size:15.4px;font-weight:400;color:#000;line-height:1;white-space:pre;transform:scaleX(1.0800);transform-origin:0 0;">55.00</div><div style="position:absolute;left:1386.00px;top:148.96px;font-size:15.4px;font-weight:400;color:#000;line-height:1;white-space:pre;transform:scaleX(1.0800);transform-origin:0 0;">55.00</div><div style="position:absolute;left:1498.00px;top:148.96px;font-size:15.4px;font-weight:400;color:#000;line-height:1;white-space:pre;transform:scaleX(1.0800);transform-origin:0 0;">55.00</div><div style="position:absolute;left:1610.00px;top:148.96px;font-size:15.4px;font-weight:400;color:#000;line-height:1;white-space:pre;transform:scaleX(1.0800);transform-origin:0 0;">55.00</div><div style="position:absolute;left:1802.50px;top:148.96px;font-size:15.4px;font-weight:400;color:#000;line-height:1;white-space:pre;transform:scaleX(1.0800);transform-origin:0 0;">25.00</div><div style="position:absolute;left:66.20px;top:171.96px;font-size:15.4px;font-weight:400;color:#000;line-height:1;white-space:pre;">ARPU - Service 4</div><div style="position:absolute;left:378.00px;top:171.96px;font-size:15.4px;font-weight:400;color:#000;line-height:1;white-space:pre;transform:scaleX(1.0800);transform-origin:0 0;">70.00</div><div style="position:absolute;left:490.00px;top:171.96px;font-size:15.4px;font-weight:400;color:#000;line-height:1;white-space:pre;transform:scaleX(1.0800);transform-origin:0 0;">70.00</div><div style="position:absolute;left:602.00px;top:171.96px;font-size:15.4px;font-weight:400;color:#000;line-height:1;white-space:pre;transform:scaleX(1.0800);transform-origin:0 0;">70.00</div><div style="position:absolute;left:714.00px;top:171.96px;font-size:15.4px;font-weight:400;color:#000;line-height:1;white-space:pre;transform:scaleX(1.0800);transform-origin:0 0;">70.00</div><div style="position:absolute;left:826.00px;top:171.96px;font-size:15.4px;font-weight:400;color:#000;line-height:1;white-space:pre;transform:scaleX(1.0800);transform-origin:0 0;">70.00</div><div style="position:absolute;left:938.00px;top:171.96px;font-size:15.4px;font-weight:400;color:#000;line-height:1;white-space:pre;transform:scaleX(1.0800);transform-origin:0 0;">70.00</div><div style="position:absolute;left:1050.00px;top:171.96px;font-size:15.4px;font-weight:400;color:#000;line-height:1;white-space:pre;transform:scaleX(1.0800);transform-origin:0 0;">70.00</div><div style="position:absolute;left:1162.00px;top:171.96px;font-size:15.4px;font-weight:400;color:#000;line-height:1;white-space:pre;transform:scaleX(1.0800);transform-origin:0 0;">70.00</div><div style="position:absolute;left:1274.00px;top:171.96px;font-size:15.4px;font-weight:400;color:#000;line-height:1;white-space:pre;transform:scaleX(1.0800);transform-origin:0 0;">70.00</div><div style="position:absolute;left:1386.00px;top:171.96px;font-size:15.4px;font-weight:400;color:#000;line-height:1;white-space:pre;transform:scaleX(1.0800);transform-origin:0 0;">70.00</div><div style="position:absolute;left:1498.00px;top:171.96px;font-size:15.4px;font-weight:400;color:#000;line-height:1;white-space:pre;transform:scaleX(1.0800);transform-origin:0 0;">70.00</div><div style="position:absolute;left:1610.00px;top:171.96px;font-size:15.4px;font-weight:400;color:#000;line-height:1;white-space:pre;transform:scaleX(1.0800);transform-origin:0 0;">70.00</div><div style="position:absolute;left:1802.50px;top:171.96px;font-size:15.4px;font-weight:400;color:#000;line-height:1;white-space:pre;transform:scaleX(1.0800);transform-origin:0 0;">25.00</div><div style="position:absolute;left:66.20px;top:194.96px;font-size:15.4px;font-weight:400;color:#000;line-height:1;white-space:pre;">ARPU - Service 5</div><div style="position:absolute;left:378.00px;top:194.96px;font-size:15.4px;font-weight:400;color:#000;line-height:1;white-space:pre;transform:scaleX(1.0800);transform-origin:0 0;">80.00</div><div style="position:absolute;left:490.00px;top:194.96px;font-size:15.4px;font-weight:400;color:#000;line-height:1;white-space:pre;transform:scaleX(1.0800);transform-origin:0 0;">80.00</div><div style="position:absolute;left:602.00px;top:194.96px;font-size:15.4px;font-weight:400;color:#000;line-height:1;white-space:pre;transform:scaleX(1.0800);transform-origin:0 0;">80.00</div><div style="position:absolute;left:714.00px;top:194.96px;font-size:15.4px;font-weight:400;color:#000;line-height:1;white-space:pre;transform:scaleX(1.0800);transform-origin:0 0;">80.00</div><div style="position:absolute;left:826.00px;top:194.96px;font-size:15.4px;font-weight:400;color:#000;line-height:1;white-space:pre;transform:scaleX(1.0800);transform-origin:0 0;">80.00</div><div style="position:absolute;left:938.00px;top:194.96px;font-size:15.4px;font-weight:400;color:#000;line-height:1;white-space:pre;transform:scaleX(1.0800);transform-origin:0 0;">80.00</div><div style="position:absolute;left:1050.00px;top:194.96px;font-size:15.4px;font-weight:400;color:#000;line-height:1;white-space:pre;transform:scaleX(1.0800);transform-origin:0 0;">80.00</div><div style="position:absolute;left:1162.00px;top:194.96px;font-size:15.4px;font-weight:400;color:#000;line-height:1;white-space:pre;transform:scaleX(1.0800);transform-origin:0 0;">80.00</div><div style="position:absolute;left:1274.00px;top:194.96px;font-size:15.4px;font-weight:400;color:#000;line-height:1;white-space:pre;transform:scaleX(1.0800);transform-origin:0 0;">80.00</div><div style="position:absolute;left:1386.00px;top:194.96px;font-size:15.4px;font-weight:400;color:#000;line-height:1;white-space:pre;transform:scaleX(1.0800);transform-origin:0 0;">80.00</div><div style="position:absolute;left:1498.00px;top:194.96px;font-size:15.4px;font-weight:400;color:#000;line-height:1;white-space:pre;transform:scaleX(1.0800);transform-origin:0 0;">80.00</div><div style="position:absolute;left:1610.00px;top:194.96px;font-size:15.4px;font-weight:400;color:#000;line-height:1;white-space:pre;transform:scaleX(1.0800);transform-origin:0 0;">80.00</div><div style="position:absolute;left:1802.50px;top:194.96px;font-size:15.4px;font-weight:400;color:#000;line-height:1;white-space:pre;transform:scaleX(1.0800);transform-origin:0 0;">25.00</div><div style="position:absolute;left:66.20px;top:217.96px;font-size:15.4px;font-weight:400;color:#000;line-height:1;white-space:pre;">ARPU - Service 6</div><div style="position:absolute;left:378.00px;top:217.96px;font-size:15.4px;font-weight:400;color:#000;line-height:1;white-space:pre;transform:scaleX(1.0800);transform-origin:0 0;">90.00</div><div style="position:absolute;left:490.00px;top:217.96px;font-size:15.4px;font-weight:400;color:#000;line-height:1;white-space:pre;transform:scaleX(1.0800);transform-origin:0 0;">90.00</div><div style="position:absolute;left:602.00px;top:217.96px;font-size:15.4px;font-weight:400;color:#000;line-height:1;white-space:pre;transform:scaleX(1.0800);transform-origin:0 0;">90.00</div><div style="position:absolute;left:714.00px;top:217.96px;font-size:15.4px;font-weight:400;color:#000;line-height:1;white-space:pre;transform:scaleX(1.0800);transform-origin:0 0;">90.00</div><div style="position:absolute;left:826.00px;top:217.96px;font-size:15.4px;font-weight:400;color:#000;line-height:1;white-space:pre;transform:scaleX(1.0800);transform-origin:0 0;">90.00</div><div style="position:absolute;left:938.00px;top:217.96px;font-size:15.4px;font-weight:400;color:#000;line-height:1;white-space:pre;transform:scaleX(1.0800);transform-origin:0 0;">90.00</div><div style="position:absolute;left:1050.00px;top:217.96px;font-size:15.4px;font-weight:400;color:#000;line-height:1;white-space:pre;transform:scaleX(1.0800);transform-origin:0 0;">90.00</div><div style="position:absolute;left:1162.00px;top:217.96px;font-size:15.4px;font-weight:400;color:#000;line-height:1;white-space:pre;transform:scaleX(1.0800);transform-origin:0 0;">90.00</div><div style="position:absolute;left:1274.00px;top:217.96px;font-size:15.4px;font-weight:400;color:#000;line-height:1;white-space:pre;transform:scaleX(1.0800);transform-origin:0 0;">90.00</div><div style="position:absolute;left:1386.00px;top:217.96px;font-size:15.4px;font-weight:400;color:#000;line-height:1;white-space:pre;transform:scaleX(1.0800);transform-origin:0 0;">90.00</div><div style="position:absolute;left:1498.00px;top:217.96px;font-size:15.4px;font-weight:400;color:#000;line-height:1;white-space:pre;transform:scaleX(1.0800);transform-origin:0 0;">90.00</div><div style="position:absolute;left:1610.00px;top:217.96px;font-size:15.4px;font-weight:400;color:#000;line-height:1;white-space:pre;transform:scaleX(1.0800);transform-origin:0 0;">90.00</div><div style="position:absolute;left:1802.50px;top:217.96px;font-size:15.4px;font-weight:400;color:#000;line-height:1;white-space:pre;transform:scaleX(1.0800);transform-origin:0 0;">25.00</div><div style="position:absolute;left:66.20px;top:240.96px;font-size:15.4px;font-weight:400;color:#000;line-height:1;white-space:pre;">Total Subscriber ARPU:</div><div style="position:absolute;left:378.00px;top:240.96px;font-size:15.4px;font-weight:400;color:#000;line-height:1;white-space:pre;transform:scaleX(1.0800);transform-origin:0 0;">62.50</div><div style="position:absolute;left:490.00px;top:240.96px;font-size:15.4px;font-weight:400;color:#000;line-height:1;white-space:pre;transform:scaleX(1.0800);transform-origin:0 0;">62.50</div><div style="position:absolute;left:602.00px;top:240.96px;font-size:15.4px;font-weight:400;color:#000;line-height:1;white-space:pre;transform:scaleX(1.0800);transform-origin:0 0;">62.50</div><div style="position:absolute;left:714.00px;top:240.96px;font-size:15.4px;font-weight:400;color:#000;line-height:1;white-space:pre;transform:scaleX(1.0800);transform-origin:0 0;">62.33</div><div style="position:absolute;left:826.00px;top:240.96px;font-size:15.4px;font-weight:400;color:#000;line-height:1;white-space:pre;transform:scaleX(1.0800);transform-origin:0 0;">62.15</div><div style="position:absolute;left:938.00px;top:240.96px;font-size:15.4px;font-weight:400;color:#000;line-height:1;white-space:pre;transform:scaleX(1.0800);transform-origin:0 0;">62.24</div><div style="position:absolute;left:1050.00px;top:240.96px;font-size:15.4px;font-weight:400;color:#000;line-height:1;white-space:pre;transform:scaleX(1.0800);transform-origin:0 0;">62.50</div><div style="position:absolute;left:1162.00px;top:240.96px;font-size:15.4px;font-weight:400;color:#000;line-height:1;white-space:pre;transform:scaleX(1.0800);transform-origin:0 0;">62.50</div><div style="position:absolute;left:1274.00px;top:240.96px;font-size:15.4px;font-weight:400;color:#000;line-height:1;white-space:pre;transform:scaleX(1.0800);transform-origin:0 0;">62.50</div><div style="position:absolute;left:1386.00px;top:240.96px;font-size:15.4px;font-weight:400;color:#000;line-height:1;white-space:pre;transform:scaleX(1.0800);transform-origin:0 0;">62.50</div><div style="position:absolute;left:1498.00px;top:240.96px;font-size:15.4px;font-weight:400;color:#000;line-height:1;white-space:pre;transform:scaleX(1.0800);transform-origin:0 0;">62.50</div><div style="position:absolute;left:1610.00px;top:240.96px;font-size:15.4px;font-weight:400;color:#000;line-height:1;white-space:pre;transform:scaleX(1.0800);transform-origin:0 0;">62.50</div><div style="position:absolute;left:1802.50px;top:240.96px;font-size:15.4px;font-weight:400;color:#000;line-height:1;white-space:pre;transform:scaleX(1.0800);transform-origin:0 0;">22.00</div><div style="position:absolute;left:1713.48px;top:263.96px;font-size:15.4px;font-weight:400;color:#ffffff;line-height:1;white-space:pre;">Average</div><div style="position:absolute;left:1802.50px;top:263.96px;font-size:15.4px;font-weight:400;color:#000;line-height:1;white-space:pre;">CaC Goal</div><div style="position:absolute;left:879.95px;top:333.18px;font-size:22px;font-weight:400;color:#767676;line-height:1;white-space:pre;transform:scaleX(0.9912);transform-origin:0 0;">2025 MRR Revenues</div><div style="position:absolute;left:799.00px;top:376.80px;font-size:13px;font-weight:400;color:#595959;line-height:1;white-space:pre;transform:scaleX(0.9483);transform-origin:0 0;">Series1</div><div style="position:absolute;left:867.00px;top:376.80px;font-size:13px;font-weight:400;color:#595959;line-height:1;white-space:pre;transform:scaleX(0.9483);transform-origin:0 0;">Series2</div><div style="position:absolute;left:936.00px;top:376.80px;font-size:13px;font-weight:400;color:#595959;line-height:1;white-space:pre;transform:scaleX(0.9483);transform-origin:0 0;">Series3</div><div style="position:absolute;left:1004.80px;top:376.80px;font-size:13px;font-weight:400;color:#595959;line-height:1;white-space:pre;transform:scaleX(0.9483);transform-origin:0 0;">Series4</div><div style="position:absolute;left:1073.00px;top:376.80px;font-size:13px;font-weight:400;color:#595959;line-height:1;white-space:pre;transform:scaleX(0.9483);transform-origin:0 0;">Series5</div><div style="position:absolute;left:1142.00px;top:376.80px;font-size:13px;font-weight:400;color:#595959;line-height:1;white-space:pre;transform:scaleX(0.9483);transform-origin:0 0;">Series6</div><div style="position:absolute;left:84.34px;top:410.14px;font-size:12px;font-weight:400;color:#595959;line-height:1;white-space:pre;transform:scaleX(1.0800);transform-origin:0 0;">250,000</div><div style="position:absolute;left:84.34px;top:504.74px;font-size:12px;font-weight:400;color:#595959;line-height:1;white-space:pre;transform:scaleX(1.0800);transform-origin:0 0;">200,000</div><div style="position:absolute;left:84.34px;top:599.34px;font-size:12px;font-weight:400;color:#595959;line-height:1;white-space:pre;transform:scaleX(1.0800);transform-origin:0 0;">150,000</div><div style="position:absolute;left:84.34px;top:693.94px;font-size:12px;font-weight:400;color:#595959;line-height:1;white-space:pre;transform:scaleX(1.0800);transform-origin:0 0;">100,000</div><div style="position:absolute;left:91.56px;top:788.54px;font-size:12px;font-weight:400;color:#595959;line-height:1;white-space:pre;transform:scaleX(1.0800);transform-origin:0 0;">50,000</div><div style="position:absolute;left:123.98px;top:883.14px;font-size:12px;font-weight:400;color:#595959;line-height:1;white-space:pre;transform:scaleX(1.0800);transform-origin:0 0;">0</div><div style="position:absolute;left:207.43px;top:893.27px;font-size:11.5px;font-weight:400;color:#595959;line-height:1;white-space:pre;">Jan</div><div style="position:absolute;left:352.21px;top:893.27px;font-size:11.5px;font-weight:400;color:#595959;line-height:1;white-space:pre;">Feb</div><div style="position:absolute;left:497.64px;top:893.27px;font-size:11.5px;font-weight:400;color:#595959;line-height:1;white-space:pre;">Mar</div><div style="position:absolute;left:644.01px;top:893.27px;font-size:11.5px;font-weight:400;color:#595959;line-height:1;white-space:pre;">Apr</div><div style="position:absolute;left:787.51px;top:893.27px;font-size:11.5px;font-weight:400;color:#595959;line-height:1;white-space:pre;">May</div><div style="position:absolute;left:934.52px;top:893.27px;font-size:11.5px;font-weight:400;color:#595959;line-height:1;white-space:pre;">Jun</div><div style="position:absolute;left:1081.86px;top:893.27px;font-size:11.5px;font-weight:400;color:#595959;line-height:1;white-space:pre;">Jul</div><div style="position:absolute;left:1224.39px;top:893.27px;font-size:11.5px;font-weight:400;color:#595959;line-height:1;white-space:pre;">Aug</div><div style="position:absolute;left:1369.81px;top:893.27px;font-size:11.5px;font-weight:400;color:#595959;line-height:1;white-space:pre;">Sep</div><div style="position:absolute;left:1516.51px;top:893.27px;font-size:11.5px;font-weight:400;color:#595959;line-height:1;white-space:pre;">Oct</div><div style="position:absolute;left:1660.65px;top:893.27px;font-size:11.5px;font-weight:400;color:#595959;line-height:1;white-space:pre;">Nov</div><div style="position:absolute;left:1806.07px;top:893.27px;font-size:11.5px;font-weight:400;color:#595959;line-height:1;white-space:pre;">Dec</div><div style="position:absolute;left:102.80px;top:912.74px;font-size:12px;font-weight:400;color:#595959;line-height:1;white-space:pre;transform:scaleX(0.9217);transform-origin:0 0;">Series6</div><div style="position:absolute;left:199.27px;top:912.74px;font-size:12px;font-weight:400;color:#595959;line-height:1;white-space:pre;transform:scaleX(0.9500);transform-origin:0 0;">35,640</div><div style="position:absolute;left:344.69px;top:912.74px;font-size:12px;font-weight:400;color:#595959;line-height:1;white-space:pre;transform:scaleX(0.9500);transform-origin:0 0;">36,360</div><div style="position:absolute;left:490.11px;top:912.74px;font-size:12px;font-weight:400;color:#595959;line-height:1;white-space:pre;transform:scaleX(0.9500);transform-origin:0 0;">37,260</div><div style="position:absolute;left:635.52px;top:912.74px;font-size:12px;font-weight:400;color:#595959;line-height:1;white-space:pre;transform:scaleX(0.9500);transform-origin:0 0;">38,070</div><div style="position:absolute;left:780.94px;top:912.74px;font-size:12px;font-weight:400;color:#595959;line-height:1;white-space:pre;transform:scaleX(0.9500);transform-origin:0 0;">39,960</div><div style="position:absolute;left:926.36px;top:912.74px;font-size:12px;font-weight:400;color:#595959;line-height:1;white-space:pre;transform:scaleX(0.9500);transform-origin:0 0;">41,400</div><div style="position:absolute;left:1071.77px;top:912.74px;font-size:12px;font-weight:400;color:#595959;line-height:1;white-space:pre;transform:scaleX(0.9500);transform-origin:0 0;">42,210</div><div style="position:absolute;left:1217.19px;top:912.74px;font-size:12px;font-weight:400;color:#595959;line-height:1;white-space:pre;transform:scaleX(0.9500);transform-origin:0 0;">43,560</div><div style="position:absolute;left:1362.61px;top:912.74px;font-size:12px;font-weight:400;color:#595959;line-height:1;white-space:pre;transform:scaleX(0.9500);transform-origin:0 0;">45,000</div><div style="position:absolute;left:1508.02px;top:912.74px;font-size:12px;font-weight:400;color:#595959;line-height:1;white-space:pre;transform:scaleX(0.9500);transform-origin:0 0;">47,610</div><div style="position:absolute;left:1653.44px;top:912.74px;font-size:12px;font-weight:400;color:#595959;line-height:1;white-space:pre;transform:scaleX(0.9500);transform-origin:0 0;">48,780</div><div style="position:absolute;left:1798.86px;top:912.74px;font-size:12px;font-weight:400;color:#595959;line-height:1;white-space:pre;transform:scaleX(0.9500);transform-origin:0 0;">43,200</div><div style="position:absolute;left:102.80px;top:934.14px;font-size:12px;font-weight:400;color:#595959;line-height:1;white-space:pre;transform:scaleX(0.9217);transform-origin:0 0;">Series5</div><div style="position:absolute;left:199.27px;top:934.14px;font-size:12px;font-weight:400;color:#595959;line-height:1;white-space:pre;transform:scaleX(0.9500);transform-origin:0 0;">31,680</div><div style="position:absolute;left:344.69px;top:934.14px;font-size:12px;font-weight:400;color:#595959;line-height:1;white-space:pre;transform:scaleX(0.9500);transform-origin:0 0;">32,320</div><div style="position:absolute;left:490.11px;top:934.14px;font-size:12px;font-weight:400;color:#595959;line-height:1;white-space:pre;transform:scaleX(0.9500);transform-origin:0 0;">33,120</div><div style="position:absolute;left:635.52px;top:934.14px;font-size:12px;font-weight:400;color:#595959;line-height:1;white-space:pre;transform:scaleX(0.9500);transform-origin:0 0;">33,840</div><div style="position:absolute;left:780.94px;top:934.14px;font-size:12px;font-weight:400;color:#595959;line-height:1;white-space:pre;transform:scaleX(0.9500);transform-origin:0 0;">35,520</div><div style="position:absolute;left:926.36px;top:934.14px;font-size:12px;font-weight:400;color:#595959;line-height:1;white-space:pre;transform:scaleX(0.9500);transform-origin:0 0;">36,800</div><div style="position:absolute;left:1071.77px;top:934.14px;font-size:12px;font-weight:400;color:#595959;line-height:1;white-space:pre;transform:scaleX(0.9500);transform-origin:0 0;">37,520</div><div style="position:absolute;left:1217.19px;top:934.14px;font-size:12px;font-weight:400;color:#595959;line-height:1;white-space:pre;transform:scaleX(0.9500);transform-origin:0 0;">38,720</div><div style="position:absolute;left:1362.61px;top:934.14px;font-size:12px;font-weight:400;color:#595959;line-height:1;white-space:pre;transform:scaleX(0.9500);transform-origin:0 0;">40,000</div><div style="position:absolute;left:1508.02px;top:934.14px;font-size:12px;font-weight:400;color:#595959;line-height:1;white-space:pre;transform:scaleX(0.9500);transform-origin:0 0;">42,320</div><div style="position:absolute;left:1653.44px;top:934.14px;font-size:12px;font-weight:400;color:#595959;line-height:1;white-space:pre;transform:scaleX(0.9500);transform-origin:0 0;">43,360</div><div style="position:absolute;left:1798.86px;top:934.14px;font-size:12px;font-weight:400;color:#595959;line-height:1;white-space:pre;transform:scaleX(0.9500);transform-origin:0 0;">38,400</div><div style="position:absolute;left:102.80px;top:955.54px;font-size:12px;font-weight:400;color:#595959;line-height:1;white-space:pre;transform:scaleX(0.9217);transform-origin:0 0;">Series4</div><div style="position:absolute;left:199.27px;top:955.54px;font-size:12px;font-weight:400;color:#595959;line-height:1;white-space:pre;transform:scaleX(0.9500);transform-origin:0 0;">27,720</div><div style="position:absolute;left:344.69px;top:955.54px;font-size:12px;font-weight:400;color:#595959;line-height:1;white-space:pre;transform:scaleX(0.9500);transform-origin:0 0;">28,280</div><div style="position:absolute;left:490.11px;top:955.54px;font-size:12px;font-weight:400;color:#595959;line-height:1;white-space:pre;transform:scaleX(0.9500);transform-origin:0 0;">28,980</div><div style="position:absolute;left:635.52px;top:955.54px;font-size:12px;font-weight:400;color:#595959;line-height:1;white-space:pre;transform:scaleX(0.9500);transform-origin:0 0;">29,610</div><div style="position:absolute;left:780.94px;top:955.54px;font-size:12px;font-weight:400;color:#595959;line-height:1;white-space:pre;transform:scaleX(0.9500);transform-origin:0 0;">31,080</div><div style="position:absolute;left:926.36px;top:955.54px;font-size:12px;font-weight:400;color:#595959;line-height:1;white-space:pre;transform:scaleX(0.9500);transform-origin:0 0;">32,200</div><div style="position:absolute;left:1071.77px;top:955.54px;font-size:12px;font-weight:400;color:#595959;line-height:1;white-space:pre;transform:scaleX(0.9500);transform-origin:0 0;">32,830</div><div style="position:absolute;left:1217.19px;top:955.54px;font-size:12px;font-weight:400;color:#595959;line-height:1;white-space:pre;transform:scaleX(0.9500);transform-origin:0 0;">33,880</div><div style="position:absolute;left:1362.61px;top:955.54px;font-size:12px;font-weight:400;color:#595959;line-height:1;white-space:pre;transform:scaleX(0.9500);transform-origin:0 0;">35,000</div><div style="position:absolute;left:1508.02px;top:955.54px;font-size:12px;font-weight:400;color:#595959;line-height:1;white-space:pre;transform:scaleX(0.9500);transform-origin:0 0;">37,030</div><div style="position:absolute;left:1653.44px;top:955.54px;font-size:12px;font-weight:400;color:#595959;line-height:1;white-space:pre;transform:scaleX(0.9500);transform-origin:0 0;">37,940</div><div style="position:absolute;left:1798.86px;top:955.54px;font-size:12px;font-weight:400;color:#595959;line-height:1;white-space:pre;transform:scaleX(0.9500);transform-origin:0 0;">33,600</div><div style="position:absolute;left:102.80px;top:976.94px;font-size:12px;font-weight:400;color:#595959;line-height:1;white-space:pre;transform:scaleX(0.9217);transform-origin:0 0;">Series3</div><div style="position:absolute;left:199.27px;top:976.94px;font-size:12px;font-weight:400;color:#595959;line-height:1;white-space:pre;transform:scaleX(0.9500);transform-origin:0 0;">24,860</div><div style="position:absolute;left:344.69px;top:976.94px;font-size:12px;font-weight:400;color:#595959;line-height:1;white-space:pre;transform:scaleX(0.9500);transform-origin:0 0;">25,355</div><div style="position:absolute;left:490.11px;top:976.94px;font-size:12px;font-weight:400;color:#595959;line-height:1;white-space:pre;transform:scaleX(0.9500);transform-origin:0 0;">26,015</div><div style="position:absolute;left:635.52px;top:976.94px;font-size:12px;font-weight:400;color:#595959;line-height:1;white-space:pre;transform:scaleX(0.9500);transform-origin:0 0;">26,620</div><div style="position:absolute;left:780.94px;top:976.94px;font-size:12px;font-weight:400;color:#595959;line-height:1;white-space:pre;transform:scaleX(0.9500);transform-origin:0 0;">27,885</div><div style="position:absolute;left:926.36px;top:976.94px;font-size:12px;font-weight:400;color:#595959;line-height:1;white-space:pre;transform:scaleX(0.9500);transform-origin:0 0;">28,930</div><div style="position:absolute;left:1071.77px;top:976.94px;font-size:12px;font-weight:400;color:#595959;line-height:1;white-space:pre;transform:scaleX(0.9500);transform-origin:0 0;">29,480</div><div style="position:absolute;left:1217.19px;top:976.94px;font-size:12px;font-weight:400;color:#595959;line-height:1;white-space:pre;transform:scaleX(0.9500);transform-origin:0 0;">30,415</div><div style="position:absolute;left:1362.61px;top:976.94px;font-size:12px;font-weight:400;color:#595959;line-height:1;white-space:pre;transform:scaleX(0.9500);transform-origin:0 0;">31,460</div><div style="position:absolute;left:1508.02px;top:976.94px;font-size:12px;font-weight:400;color:#595959;line-height:1;white-space:pre;transform:scaleX(0.9500);transform-origin:0 0;">33,220</div><div style="position:absolute;left:1653.44px;top:976.94px;font-size:12px;font-weight:400;color:#595959;line-height:1;white-space:pre;transform:scaleX(0.9500);transform-origin:0 0;">34,045</div><div style="position:absolute;left:1798.86px;top:976.94px;font-size:12px;font-weight:400;color:#595959;line-height:1;white-space:pre;transform:scaleX(0.9500);transform-origin:0 0;">36,465</div><div style="position:absolute;left:102.80px;top:998.34px;font-size:12px;font-weight:400;color:#595959;line-height:1;white-space:pre;transform:scaleX(0.9217);transform-origin:0 0;">Series2</div><div style="position:absolute;left:199.27px;top:998.34px;font-size:12px;font-weight:400;color:#595959;line-height:1;white-space:pre;transform:scaleX(0.9500);transform-origin:0 0;">16,515</div><div style="position:absolute;left:344.69px;top:998.34px;font-size:12px;font-weight:400;color:#595959;line-height:1;white-space:pre;transform:scaleX(0.9500);transform-origin:0 0;">16,830</div><div style="position:absolute;left:490.11px;top:998.34px;font-size:12px;font-weight:400;color:#595959;line-height:1;white-space:pre;transform:scaleX(0.9500);transform-origin:0 0;">17,280</div><div style="position:absolute;left:635.52px;top:998.34px;font-size:12px;font-weight:400;color:#595959;line-height:1;white-space:pre;transform:scaleX(0.9500);transform-origin:0 0;">17,280</div><div style="position:absolute;left:780.94px;top:998.34px;font-size:12px;font-weight:400;color:#595959;line-height:1;white-space:pre;transform:scaleX(0.9500);transform-origin:0 0;">17,685</div><div style="position:absolute;left:926.36px;top:998.34px;font-size:12px;font-weight:400;color:#595959;line-height:1;white-space:pre;transform:scaleX(0.9500);transform-origin:0 0;">18,540</div><div style="position:absolute;left:1071.77px;top:998.34px;font-size:12px;font-weight:400;color:#595959;line-height:1;white-space:pre;transform:scaleX(0.9500);transform-origin:0 0;">19,575</div><div style="position:absolute;left:1217.19px;top:998.34px;font-size:12px;font-weight:400;color:#595959;line-height:1;white-space:pre;transform:scaleX(0.9500);transform-origin:0 0;">20,250</div><div style="position:absolute;left:1362.61px;top:998.34px;font-size:12px;font-weight:400;color:#595959;line-height:1;white-space:pre;transform:scaleX(0.9500);transform-origin:0 0;">20,880</div><div style="position:absolute;left:1508.02px;top:998.34px;font-size:12px;font-weight:400;color:#595959;line-height:1;white-space:pre;transform:scaleX(0.9500);transform-origin:0 0;">22,095</div><div style="position:absolute;left:1653.44px;top:998.34px;font-size:12px;font-weight:400;color:#595959;line-height:1;white-space:pre;transform:scaleX(0.9500);transform-origin:0 0;">22,860</div><div style="position:absolute;left:1798.86px;top:998.34px;font-size:12px;font-weight:400;color:#595959;line-height:1;white-space:pre;transform:scaleX(0.9500);transform-origin:0 0;">24,255</div><div style="position:absolute;left:102.80px;top:1019.74px;font-size:12px;font-weight:400;color:#595959;line-height:1;white-space:pre;transform:scaleX(0.9217);transform-origin:0 0;">Series1</div><div style="position:absolute;left:202.44px;top:1019.74px;font-size:12px;font-weight:400;color:#595959;line-height:1;white-space:pre;transform:scaleX(0.9500);transform-origin:0 0;">6,930</div><div style="position:absolute;left:347.86px;top:1019.74px;font-size:12px;font-weight:400;color:#595959;line-height:1;white-space:pre;transform:scaleX(0.9500);transform-origin:0 0;">7,070</div><div style="position:absolute;left:493.28px;top:1019.74px;font-size:12px;font-weight:400;color:#595959;line-height:1;white-space:pre;transform:scaleX(0.9500);transform-origin:0 0;">7,245</div><div style="position:absolute;left:638.69px;top:1019.74px;font-size:12px;font-weight:400;color:#595959;line-height:1;white-space:pre;transform:scaleX(0.9500);transform-origin:0 0;">7,420</div><div style="position:absolute;left:784.11px;top:1019.74px;font-size:12px;font-weight:400;color:#595959;line-height:1;white-space:pre;transform:scaleX(0.9500);transform-origin:0 0;">7,770</div><div style="position:absolute;left:929.53px;top:1019.74px;font-size:12px;font-weight:400;color:#595959;line-height:1;white-space:pre;transform:scaleX(0.9500);transform-origin:0 0;">8,050</div><div style="position:absolute;left:1074.94px;top:1019.74px;font-size:12px;font-weight:400;color:#595959;line-height:1;white-space:pre;transform:scaleX(0.9500);transform-origin:0 0;">8,190</div><div style="position:absolute;left:1220.36px;top:1019.74px;font-size:12px;font-weight:400;color:#595959;line-height:1;white-space:pre;transform:scaleX(0.9500);transform-origin:0 0;">8,470</div><div style="position:absolute;left:1365.78px;top:1019.74px;font-size:12px;font-weight:400;color:#595959;line-height:1;white-space:pre;transform:scaleX(0.9500);transform-origin:0 0;">8,750</div><div style="position:absolute;left:1511.19px;top:1019.74px;font-size:12px;font-weight:400;color:#595959;line-height:1;white-space:pre;transform:scaleX(0.9500);transform-origin:0 0;">9,240</div><div style="position:absolute;left:1656.61px;top:1019.74px;font-size:12px;font-weight:400;color:#595959;line-height:1;white-space:pre;transform:scaleX(0.9500);transform-origin:0 0;">9,485</div><div style="position:absolute;left:1798.86px;top:1019.74px;font-size:12px;font-weight:400;color:#595959;line-height:1;white-space:pre;transform:scaleX(0.9500);transform-origin:0 0;">10,150</div>
<div style="position:absolute;left:1894px;top:98px;width:25px;height:975px;background:#e8eaed;"></div><div style="position:absolute;left:1897px;top:99px;width:21px;height:977px;background:#f4f4f4;border-radius:10.5px"></div><svg style="position:absolute;left:1901px;top:102px" width="14" height="12"><path d="M7 2.5 L12 9.5 L2 9.5 Z" fill="#6e6e6e" stroke="#6e6e6e" stroke-width="1.5" stroke-linejoin="round"/></svg><svg style="position:absolute;left:1901px;top:1059.5px" width="14" height="12"><path d="M7 9.5 L12 2.5 L2 2.5 Z" fill="#6e6e6e" stroke="#6e6e6e" stroke-width="1.5" stroke-linejoin="round"/></svg><div style="position:absolute;left:1902px;top:592px;width:11.5px;height:441px;background:#6e6e6e;border-radius:6px"></div><div style="position:absolute;left:0px;top:1073px;width:1919px;height:40px;background:#e6e9ed;"></div><div style="position:absolute;left:1897px;top:1060px;width:21px;height:16px;background:#f4f4f4;border-radius:0 0 10.5px 10.5px"></div><svg style="position:absolute;left:1901px;top:1059.5px" width="14" height="12"><path d="M7 9.5 L12 2.5 L2 2.5 Z" fill="#6e6e6e" stroke="#6e6e6e" stroke-width="1.5" stroke-linejoin="round"/></svg><div style="position:absolute;left:289px;top:1066px;width:193px;height:41.5px;background:#fff;border-radius:0 0 6px 6px"></div><svg style="position:absolute;left:279px;top:1073px" width="10" height="10"><path d="M0 0 H10 V10 Q10 0 0 0 Z" fill="#ffffff"/></svg><svg style="position:absolute;left:482px;top:1073px" width="10" height="10"><path d="M10 0 H0 V10 Q0 0 10 0 Z" fill="#ffffff"/></svg><svg style="position:absolute;left:30px;top:1084px" width="14" height="16"><path d="M9.5 2.5 L3.5 8 L9.5 13.5" fill="none" stroke="#9a9a9a" stroke-width="1.4"/></svg><svg style="position:absolute;left:70px;top:1084px" width="14" height="16"><path d="M4.5 2.5 L10.5 8 L4.5 13.5" fill="none" stroke="#333" stroke-width="1.4"/></svg><div style="position:absolute;left:284px;top:1082px;width:1px;height:22px;background:#c8cbd0;"></div><div style="position:absolute;left:576px;top:1082px;width:1px;height:22px;background:#c8cbd0;"></div><div style="position:absolute;left:671px;top:1082px;width:1px;height:22px;background:#c8cbd0;"></div><div style="position:absolute;left:766px;top:1082px;width:1px;height:22px;background:#c8cbd0;"></div><div style="position:absolute;left:847px;top:1082px;width:1px;height:22px;background:#c8cbd0;"></div><div style="position:absolute;left:1090px;top:1082px;width:1px;height:22px;background:#c8cbd0;"></div><div style="position:absolute;left:1340px;top:1082px;width:1px;height:22px;background:#c8cbd0;"></div><div style="position:absolute;left:1488px;top:1082px;width:1px;height:22px;background:#c8cbd0;"></div><div style="position:absolute;left:487px;top:1082px;width:1px;height:22px;background:#c8cbd0;"></div><div style="position:absolute;left:299px;top:1103px;width:173px;height:2px;background:#107c41;"></div><div style="position:absolute;left:1700.5px;top:1090.5px;width:3px;height:3px;background:#444;border-radius:50%"></div><div style="position:absolute;left:1706.5px;top:1090.5px;width:3px;height:3px;background:#444;border-radius:50%"></div><div style="position:absolute;left:1712.5px;top:1090.5px;width:3px;height:3px;background:#444;border-radius:50%"></div><div style="position:absolute;left:1741px;top:1092px;width:15px;height:1.4px;background:#444;"></div><div style="position:absolute;left:1747.8px;top:1085px;width:1.4px;height:15px;background:#444;"></div><div style="position:absolute;left:1787.5px;top:1087.7px;width:2.6px;height:2.6px;background:#444;border-radius:50%"></div><div style="position:absolute;left:1787.5px;top:1092.2px;width:2.6px;height:2.6px;background:#444;border-radius:50%"></div><div style="position:absolute;left:1787.5px;top:1096.7px;width:2.6px;height:2.6px;background:#444;border-radius:50%"></div><div style="position:absolute;left:1810px;top:1082px;width:86.5px;height:21px;background:#f2f3f5;border-radius:10.5px"></div><svg style="position:absolute;left:1813px;top:1085px" width="16" height="16"><path d="M3.5 7.5 L11.5 2.5 L11.5 12.5 Z" fill="#6e6e6e" stroke="#6e6e6e" stroke-linejoin="round" stroke-width="1.2"/></svg><svg style="position:absolute;left:1879px;top:1085px" width="16" height="16"><path d="M12.5 7.5 L4.5 2.5 L4.5 12.5 Z" fill="#6e6e6e" stroke="#6e6e6e" stroke-linejoin="round" stroke-width="1.2"/></svg><div style="position:absolute;left:1830px;top:1086.5px;width:40px;height:11px;background:#6e6e6e;border-radius:5.5px"></div><div style="position:absolute;left:0px;top:1113px;width:1919px;height:21px;background:#f3f3f3;"></div><div style="position:absolute;left:0px;top:1113px;width:1919px;height:1px;background:#d6d6d6;"></div><svg style="position:absolute;left:74px;top:1118px" width="20" height="16"><path d="M1.6 16 V2 H17.4 V8" fill="none" stroke="#333" stroke-width="1.5"/><path d="M1.6 4.6 H17.4" stroke="#333" stroke-width="2"/><path d="M3.8 7.6 H9 M3.8 10.6 H6.5 M3.8 13.6 H6" stroke="#333" stroke-width="1.3"/><circle cx="13.2" cy="13.2" r="4.3" fill="none" stroke="#333" stroke-width="1.5"/><circle cx="13.2" cy="13.2" r="2" fill="#333"/></svg><svg style="position:absolute;left:113px;top:1116px" width="22" height="18"><circle cx="11" cy="3.6" r="2.4" fill="none" stroke="#333" stroke-width="1.6"/><path d="M2.2 5.5 Q6.5 9 11 8.2 Q15.5 9 19.6 5.2 M11 8.2 L9.6 12.5 L6.8 18 M9.6 12.5 L12.8 18" fill="none" stroke="#333" stroke-width="1.6" stroke-linejoin="round"/><path d="M14 12.6 L19.3 17.9 M19.3 12.6 L14 17.9" stroke="#333" stroke-width="1.4"/></svg><div style="position:absolute;left:1548px;top:1114px;width:50px;height:20px;background:#dcdcdc;"></div><svg style="position:absolute;left:1563px;top:1118px" width="19" height="16"><rect x="0.5" y="0.5" width="17.5" height="16" fill="#454545"/><path d="M6.4 1.6 V16 M12.1 1.6 V16 M1.6 6.3 H16.9 M1.6 11.6 H16.9" stroke="#dcdcdc" stroke-width="1.5"/></svg><svg style="position:absolute;left:1613px;top:1117px" width="21" height="17"><path d="M1.3 17 V1.3 H19.2 V17" fill="none" stroke="#454545" stroke-width="1.7"/><rect x="5" y="4.6" width="10" height="12" fill="none" stroke="#454545" stroke-width="1.4"/><path d="M7.2 8 H12.8 M7.2 11 H12.8 M7.2 14 H12.8" stroke="#454545" stroke-width="1.3"/></svg><svg style="position:absolute;left:1663px;top:1117px" width="21" height="17"><path d="M1.3 17 V1.3 H19.2 V17" fill="none" stroke="#454545" stroke-width="1.7"/><path d="M6.5 1.3 V9.2 H18.5 M12.5 1.3 V9.2" fill="none" stroke="#454545" stroke-width="1.6"/></svg><div style="position:absolute;left:1705px;top:1126.5px;width:10px;height:1.3px;background:#444;"></div><div style="position:absolute;left:1721px;top:1126.7px;width:125px;height:1px;background:#777;"></div><div style="position:absolute;left:1778.7px;top:1120px;width:6.3px;height:14px;background:#555;"></div><div style="position:absolute;left:1852px;top:1126.5px;width:10px;height:1.3px;background:#444;"></div><div style="position:absolute;left:1856.3px;top:1122px;width:1.3px;height:10px;background:#444;"></div>
<div style="position:absolute;left:153.20px;top:1086.39px;font-size:17.5px;font-weight:400;color:#333333;line-height:1;white-space:pre;transform:scaleX(0.9851);transform-origin:0 0;">2025 Accounts</div><div style="position:absolute;left:504.60px;top:1086.39px;font-size:17.5px;font-weight:400;color:#333333;line-height:1;white-space:pre;transform:scaleX(0.9183);transform-origin:0 0;">IS 2025</div><div style="position:absolute;left:592.00px;top:1086.39px;font-size:17.5px;font-weight:400;color:#333333;line-height:1;white-space:pre;transform:scaleX(0.9088);transform-origin:0 0;">CF 2025</div><div style="position:absolute;left:687.00px;top:1086.39px;font-size:17.5px;font-weight:400;color:#333333;line-height:1;white-space:pre;transform:scaleX(0.9160);transform-origin:0 0;">BS 2025</div><div style="position:absolute;left:782.00px;top:1086.39px;font-size:17.5px;font-weight:400;color:#333333;line-height:1;white-space:pre;transform:scaleX(0.9961);transform-origin:0 0;">Inputs</div><div style="position:absolute;left:865.30px;top:1086.39px;font-size:17.5px;font-weight:400;color:#333333;line-height:1;white-space:pre;transform:scaleX(0.9720);transform-origin:0 0;">Statements Summary 2025</div><div style="position:absolute;left:1109.30px;top:1086.39px;font-size:17.5px;font-weight:400;color:#333333;line-height:1;white-space:pre;transform:scaleX(0.9476);transform-origin:0 0;">Sales Summary Charts 2025</div><div style="position:absolute;left:1358.50px;top:1086.39px;font-size:17.5px;font-weight:400;color:#333333;line-height:1;white-space:pre;transform:scaleX(0.9790);transform-origin:0 0;">2026 Accounts</div><div style="position:absolute;left:1506.30px;top:1086.39px;font-size:17.5px;font-weight:400;color:#333333;line-height:1;white-space:pre;transform:scaleX(0.9614);transform-origin:0 0;">2026 MRR Dashboard</div><div style="position:absolute;left:299.00px;top:1082.29px;font-size:17.5px;font-weight:700;color:#2a2a2a;line-height:1;white-space:pre;transform:scaleX(0.9599);transform-origin:0 0;">2025 MRR Dashboard</div><div style="position:absolute;left:14.50px;top:1121.72px;font-size:12.5px;font-weight:400;color:#333333;line-height:1;white-space:pre;transform:scaleX(0.9823);transform-origin:0 0;">Ready</div><div style="position:absolute;left:137.30px;top:1121.72px;font-size:12.5px;font-weight:700;color:#222222;line-height:1;white-space:pre;transform:scaleX(1.0156);transform-origin:0 0;">Accessibility: Investigate</div><div style="position:absolute;left:1878.00px;top:1121.72px;font-size:12.5px;font-weight:400;color:#333333;line-height:1;white-space:pre;transform:scaleX(0.9708);transform-origin:0 0;">97%</div>

</body></html>
